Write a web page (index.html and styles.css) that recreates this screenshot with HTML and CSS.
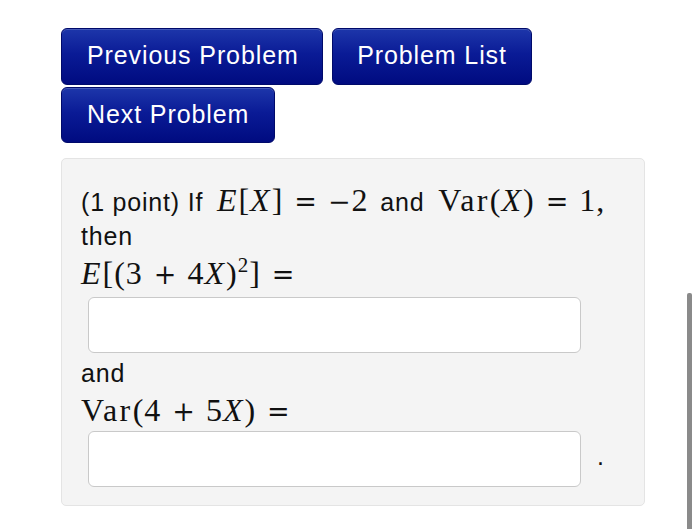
FILE: index.html
```html
<!DOCTYPE html>
<html>
<head>
<meta charset="utf-8">
<link rel="stylesheet" href="styles.css">
</head>
<body>
<div class="page">
  <div class="nav">
    <a class="btn btn-prev">Previous Problem</a>
    <a class="btn btn-list">Problem List</a>
    <a class="btn btn-next">Next Problem</a>
  </div>
  <div class="panel">
    <div class="line line1">(1 point) If <span class="m"><i>E</i>[<i>X</i>]<span class="op">=</span><span class="neg">−</span>2</span> and <span class="m"><span class="fn">Var</span>(<i>X</i>)<span class="op">=</span>1,</span></div>
    <div class="line">then</div>
    <div class="line mline"><span class="m first"><i>E</i>[(3<span class="op">+</span>4<i>X</i>)<sup>2</sup>]<span class="op">=</span></span></div>
    <div class="answer"><span class="field"></span></div>
    <div class="line and">and</div>
    <div class="line mline"><span class="m first"><span class="fn">Var</span>(4<span class="op">+</span>5<i>X</i>)<span class="op">=</span></span></div>
    <div class="answer answer2"><span class="field"></span><span class="dot">.</span></div>
  </div>
  <div class="scrollbar"></div>
</div>
</body>
</html>
```

FILE: styles.css
```css
html, body {
  margin: 0;
  padding: 0;
  background: #ffffff;
}

.page {
  position: relative;
  width: 700px;
  height: 529px;
  overflow: hidden;
  padding: 28px 0 0 61px;
  box-sizing: border-box;
  font-family: "Liberation Sans", Arial, sans-serif;
  color: #111;
}

.nav {
  display: flex;
  flex-wrap: wrap;
  width: 584px;
  column-gap: 9px;
  row-gap: 2px;
}

.btn {
  display: flex;
  align-items: center;
  box-sizing: border-box;
  height: 57px;
  padding: 0 20px 2px 25px;
  border: 1px solid #000a6a;
  border-radius: 6px;
  background: linear-gradient(#1d36aa 0%, #0a1b96 45%, #000b80 100%);
  box-shadow: inset 0 1px 0 rgba(255,255,255,0.18);
  color: #ffffff;
  font-size: 25px;
  letter-spacing: 0.9px;
  white-space: nowrap;
}

.btn-prev { width: 262px; }
.btn-list { width: 200px; justify-content: center; padding: 0 0 2px 0; }
.btn-next { width: 214px; height: 56px; }

.panel {
  box-sizing: border-box;
  width: 584px;
  height: 348px;
  margin-top: 15px;
  padding: 24px 0 0 19px;
  background: #f4f4f4;
  border: 1px solid #e4e4e4;
  border-radius: 5px;
  font-size: 25px;
  letter-spacing: 0.8px;
}

.line {
  line-height: 34px;
  white-space: nowrap;
}

.m {
  font-family: "Liberation Serif", "Times New Roman", serif;
  font-size: 32px;
  letter-spacing: 1px;
  margin: 0 4px 0 6px;
}

.m.first {
  margin-left: 0;
}

.fn {
  letter-spacing: 2.4px;
}

.m i {
  font-style: italic;
  padding-right: 1px;
}

.m sup {
  font-size: 21px;
  line-height: 0;
  vertical-align: 12px;
}

.op, .neg {
  font-family: "DejaVu Serif", serif;
  font-size: 27px;
  letter-spacing: 0;
}

.op {
  margin: 0 11px;
}

.neg {
  margin-right: 1px;
}

.mline {
  line-height: 40px;
}

.answer {
  display: flex;
  align-items: flex-end;
  margin: 2px 0 0 7px;
}

.answer2 {
  margin-top: -1px;
}

.field {
  display: block;
  box-sizing: border-box;
  width: 493px;
  height: 56px;
  background: #ffffff;
  border: 1px solid #c9c9c9;
  border-radius: 6px;
}

.dot {
  margin: 0 0 19px 16px;
  line-height: 24px;
}

.and {
  margin-top: 3px;
}

.scrollbar {
  position: absolute;
  left: 687px;
  top: 293px;
  width: 5px;
  height: 240px;
  background: #8a8a8a;
  border-radius: 2px;
}
```
